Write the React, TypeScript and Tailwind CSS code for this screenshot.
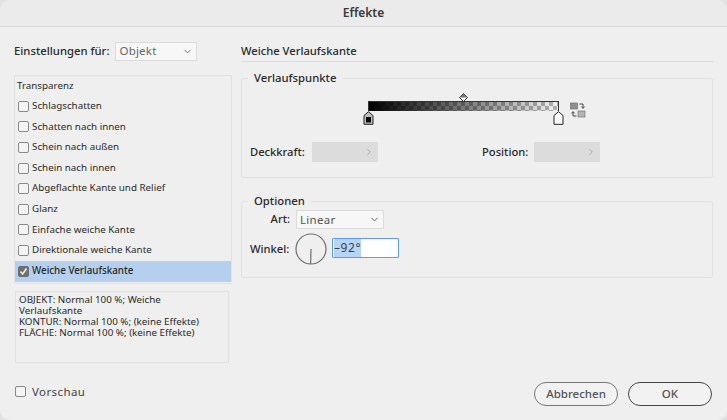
import React from 'react';
import { ChevronDown, ChevronRight } from 'lucide-react';

const effects = [
  'Schlagschatten',
  'Schatten nach innen',
  'Schein nach außen',
  'Schein nach innen',
  'Abgeflachte Kante und Relief',
  'Glanz',
  'Einfache weiche Kante',
  'Direktionale weiche Kante'
];

const CheckBox: React.FC<{ checked?: boolean }> = ({ checked }) => (
  <span
    className={`flex h-[11px] w-[11px] shrink-0 items-center justify-center rounded-[2px] border ${
      checked ? 'border-[#6f6f6f] bg-[#6f6f6f]' : 'border-[#8a8a8a] bg-[#f4f4f4]'
    }`}
  >
    {checked && (
      <svg width="9" height="9" viewBox="0 0 9 9" fill="none">
        <path d="M1.5 4.5 L3.7 7 L7.5 1.5" stroke="#efefef" strokeWidth="1.6" />
      </svg>
    )}
  </span>
);

const DisabledField: React.FC = () => (
  <div className="flex h-[20px] w-[66px] items-center justify-end bg-[#dcdcdc] pr-[4px]">
    <ChevronRight size={10} strokeWidth={2} className="text-[#a0a0a0]" />
  </div>
);

const Stop: React.FC<{ fill: string; shade: string; className: string }> = ({ fill, shade, className }) => (
  <svg width="11" height="14" viewBox="0 0 11 14" className={className}>
    <path d="M5.5 0.7 L10 4.5 V13.3 H1 V4.5 Z" fill={shade} stroke="#222" strokeWidth="1" />
    <rect x="3" y="6" width="5" height="5.5" fill={fill} />
  </svg>
);

const SwapIcon: React.FC = () => (
  <svg width="16" height="16" viewBox="0 0 16 16" className="mt-[1px]">
    <rect x="0.5" y="1" width="7" height="6" fill="#8f8f8f" stroke="#666" strokeWidth="0.6" />
    <rect x="8" y="9" width="7" height="6" fill="#b5b5b5" stroke="#666" strokeWidth="0.6" />
    <path d="M9.5 2 H13 V6 M11.5 4.6 L13 6.4 L14.6 4.6" fill="none" stroke="#444" strokeWidth="1" />
    <path d="M6.5 14 H3 V10 M1.5 11.4 L3 9.6 L4.6 11.4" fill="none" stroke="#444" strokeWidth="1" />
  </svg>
);

const App: React.FC = () => {
  return (
    <div className="h-[420px] w-[727px] overflow-hidden bg-[#e2e2e2] font-['Noto_Sans',sans-serif] text-[11px] text-[#2a2a2a]">
      <div className="flex h-full flex-col overflow-hidden rounded-[10px] bg-[#efefef]">
        <div className="flex h-[27px] shrink-0 items-center justify-center border-b border-[#dcdcdc] bg-[#ebebeb] text-[12px] font-semibold text-[#3a3a3a]">
          Effekte
        </div>

        <div className="flex flex-1 gap-[9px] pl-[14px] pr-[14px]">
          <div className="flex w-[218px] shrink-0 flex-col">
            <div className="mt-[14px] flex h-[20px] items-center gap-[6px]">
              <span className="text-[11.3px] font-medium">Einstellungen für:</span>
              <div className="flex h-[19px] w-[82px] items-center justify-between border border-[#dcdcdc] bg-[#f7f7f7] pl-[3px] pr-[3px] text-[11.5px] tracking-[0.2px] text-[#666]">
                Objekt
                <ChevronDown size={11} strokeWidth={2} className="text-[#666]" />
              </div>
            </div>

            <div className="mt-[14px] flex h-[209px] flex-col border border-[#e2e2e2]">
              <div className="flex h-[20px] items-center pl-[2px] text-[9.8px]">Transparenz</div>
              {effects.map((name) => (
                <div key={name} className="flex h-[20.6px] items-center gap-[3px] pl-[3px] text-[9.8px]">
                  <CheckBox />
                  {name}
                </div>
              ))}
              <div className="flex h-[21px] items-center gap-[3px] bg-[#b5d0ee] pl-[3px] text-[9.8px] font-medium">
                <CheckBox checked />
                Weiche Verlaufskante
              </div>
            </div>

            <div className="ml-[1px] mt-[7px] h-[72px] w-[214px] border border-[#e2e2e2] px-[3px] pt-[2px] text-[9.8px] leading-[11px]">
              <p>
                OBJEKT: Normal 100 %; Weiche
                <br />
                Verlaufskante
              </p>
              <p>KONTUR: Normal 100 %; (keine Effekte)</p>
              <p>FLÄCHE: Normal 100 %; (keine Effekte)</p>
            </div>

            <div className="ml-[1px] mt-[20px] flex items-center gap-[6px] text-[11.5px] tracking-[0.4px] text-[#444]">
              <CheckBox />
              Vorschau
            </div>
          </div>

          <div className="flex flex-1 flex-col">
            <div className="mt-[16px] h-[19px] border-b border-[#dcdcdc] text-[11.2px] font-medium leading-[16px]">
              Weiche Verlaufskante
            </div>

            <fieldset className="mt-[10px] h-[106px] rounded-[2px] border border-[#e2e2e2] pl-[8px]">
              <legend className="-ml-[2px] px-[6px] text-[11.3px] font-medium leading-[12px]">Verlaufspunkte</legend>
              <div className="mt-[17px] flex items-start pl-[118px]">
                <div className="relative h-[10px] w-[191px] border-x border-t border-[#333] bg-[linear-gradient(to_right,#000,transparent),repeating-conic-gradient(#b0b0b0_0_25%,#f2f2f2_0_50%)] bg-[length:100%_100%,8px_8px]">
                  <svg width="9" height="9" viewBox="0 0 9 9" className="absolute left-[90px] top-[-9px]">
                    <path d="M4.5 0.5 L8.5 4.5 L4.5 8.5 L0.5 4.5 Z" fill="#fff" stroke="#333" />
                    <path d="M4.5 0.5 L8.5 4.5 L0.5 4.5 Z" fill="#777" />
                  </svg>
                  <Stop fill="#000" shade="#bdbdbd" className="absolute left-[-6px] top-[9px]" />
                  <Stop fill="#fff" shade="#fff" className="absolute right-[-6px] top-[9px]" />
                </div>
                <div className="ml-[11px]">
                  <SwapIcon />
                </div>
              </div>
              <div className="mt-[24px] flex items-center">
                <span className="w-[62px] text-[11.2px] font-medium">Deckkraft:</span>
                <DisabledField />
                <span className="ml-[104px] w-[52px] text-[11.2px] font-medium">Position:</span>
                <DisabledField />
              </div>
            </fieldset>

            <fieldset className="mt-[17px] h-[83px] rounded-[2px] border border-[#e2e2e2] pl-[8px]">
              <legend className="-ml-[2px] px-[6px] text-[11.3px] font-medium leading-[12px]">Optionen</legend>
              <div className="mt-[3px] flex items-center">
                <span className="w-[41px] pr-[1px] text-right text-[11.2px] font-medium">Art:</span>
                <div className="ml-[5px] flex h-[19px] w-[88px] items-center justify-between border border-[#dcdcdc] bg-[#f7f7f7] pl-[3px] pr-[3px] text-[11.5px] tracking-[0.3px] text-[#555]">
                  Linear
                  <ChevronDown size={11} strokeWidth={2} className="text-[#555]" />
                </div>
              </div>
              <div className="mt-[4px] flex items-center">
                <span className="w-[41px] text-[11.2px] font-medium">Winkel:</span>
                <svg width="32" height="32" viewBox="0 0 32 32" className="ml-[4px]">
                  <circle cx="16" cy="16" r="15" fill="none" stroke="#6e6e6e" strokeWidth="1.2" />
                  <path d="M16 16 L15.6 31" stroke="#6e6e6e" strokeWidth="1.2" />
                </svg>
                <div className="mb-[3px] ml-[5px] flex h-[20px] w-[67px] items-center rounded-[1px] border-[1.5px] border-[#5c9ced] bg-white pl-[1px] text-[12px] tracking-[0.6px] text-[#444]">
                  <span className="bg-[#b5d5fb]">–92°</span>
                </div>
              </div>
            </fieldset>

            <div className="mt-[104px] flex justify-end gap-[10px] pr-[1px]">
              <button
                type="button"
                className="h-[24px] w-[84px] rounded-full border border-[#777] bg-[#f2f2f2] text-[11.5px] font-medium text-[#555]"
              >
                Abbrechen
              </button>
              <button
                type="button"
                className="h-[24px] w-[84px] rounded-full border-[1.5px] border-[#444] bg-[#f2f2f2] text-[11.5px] font-medium text-[#555]"
              >
                OK
              </button>
            </div>
          </div>
        </div>
      </div>
    </div>
  );
};

export default App;
